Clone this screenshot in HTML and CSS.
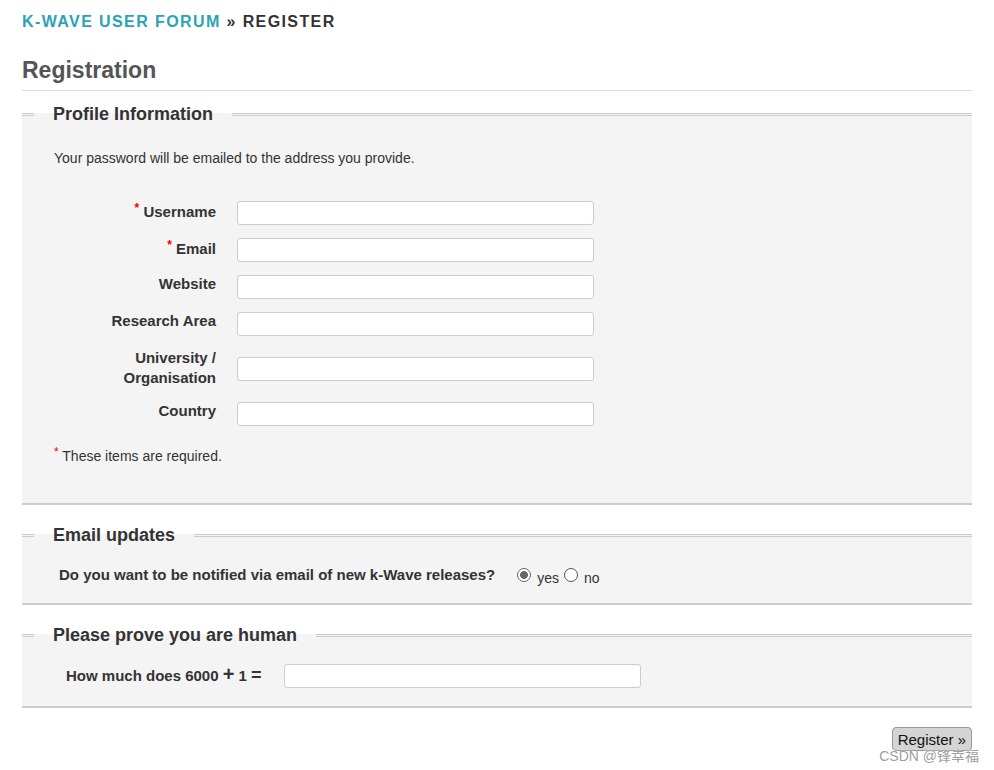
FILE: index.html
```html
<!DOCTYPE html>
<html>
    <head>
        <meta charset="UTF-8" />
        <title>k-Wave User Forum - Register</title>
        <link rel="stylesheet" href="styles.css">
    </head>
    <body>
        <div class="page">
            <div class="crumbs">
                <a href="#" class="crumb-home">K-Wave User Forum</a>
                <span class="crumb-sep">&raquo;</span>
                <span class="crumb-current">Register</span>
            </div>

            <h1 class="title">Registration</h1>

            <form id="register-form">
                <!-- Profile -->
                <fieldset class="box">
                    <legend>Profile Information</legend>
                    <div class="box-body box-profile">
                        <p class="note">Your password will be emailed to the address you provide.</p>

                        <div class="row">
                            <label for="username" class="required"><span class="req">*</span> Username</label>
                            <input type="text" id="username" name="username" />
                        </div>
                        <div class="row">
                            <label for="email" class="required"><span class="req">*</span> Email</label>
                            <input type="text" id="email" name="email" />
                        </div>
                        <div class="row">
                            <label for="website">Website</label>
                            <input type="text" id="website" name="website" />
                        </div>
                        <div class="row">
                            <label for="research">Research Area</label>
                            <input type="text" id="research" name="research" />
                        </div>
                        <div class="row row-tall">
                            <label for="university">University / Organisation</label>
                            <input type="text" id="university" name="university" />
                        </div>
                        <div class="row">
                            <label for="country">Country</label>
                            <input type="text" id="country" name="country" />
                        </div>

                        <p class="note note-req"><span class="req">*</span> These items are required.</p>
                    </div>
                </fieldset>

                <!-- Email updates -->
                <fieldset class="box">
                    <legend>Email updates</legend>
                    <div class="box-body box-updates">
                        <span class="question">Do you want to be notified via email of new k-Wave releases?</span>
                        <span class="choices">
                            <input type="radio" id="notify-yes" name="notify" value="yes" checked />
                            <label for="notify-yes">yes</label>
                            <input type="radio" id="notify-no" name="notify" value="no" />
                            <label for="notify-no">no</label>
                        </span>
                    </div>
                </fieldset>

                <!-- Captcha -->
                <fieldset class="box">
                    <legend>Please prove you are human</legend>
                    <div class="box-body box-human">
                        <label for="captcha" class="question">How much does 6000 <span class="op">+</span> 1 <span class="op op-eq">=</span></label>
                        <input type="text" id="captcha" name="captcha" />
                    </div>
                </fieldset>

                <div class="actions">
                    <button type="submit" class="btn">Register &raquo;</button>
                </div>
            </form>

            <span class="watermark">CSDN @锋幸福</span>
        </div>
    </body>
</html>
```

FILE: styles.css
```css
html,
body {
    margin: 0;
    padding: 0;
}

body {
    font-family: "Liberation Sans", Arial, "Noto Sans CJK SC", sans-serif;
    font-size: 14px;
    color: #333;
    background-color: #fff;
}

.page {
    position: relative;
    margin: 0 22px;
    padding-top: 12px;
    height: 758px;
}

/* breadcrumb */
.crumbs {
    font-size: 16px;
    line-height: 20px;
    font-weight: bold;
    text-transform: uppercase;
    letter-spacing: 1.4px;
}

.crumb-home {
    color: #2aa3b4;
    text-decoration: none;
}

.crumb-sep,
.crumb-current {
    color: #333;
}

.title {
    margin: 24px 0 0 0;
    padding-bottom: 6px;
    font-size: 23px;
    line-height: 28px;
    color: #555;
    border-bottom: 1px solid #ddd;
}

/* fieldsets */
.box {
    margin: 12px 0 0 0;
    padding: 0;
    min-width: 0;
    background-color: #f4f4f4;
    border: none;
    border-top: 3px double #ccc;
    border-bottom: 2px solid #ccc;
}

.box + .box {
    margin-top: 19px;
}

.box legend {
    margin-left: 12px;
    padding: 0 19px;
    font-size: 18px;
    line-height: 22px;
    font-weight: bold;
    color: #333;
}

.note {
    margin: 0;
    font-size: 14px;
    line-height: 18px;
}

.box-profile {
    padding: 24px 0 38px 32px;
}

.box-profile .note:first-child {
    margin-bottom: 34px;
}

.row {
    display: flex;
    align-items: center;
    margin-bottom: 13px;
}

.row label {
    position: relative;
    top: -3px;
    width: 162px;
    margin-right: 21px;
    text-align: right;
    font-size: 15px;
    line-height: 20px;
    font-weight: bold;
}

.row label.required {
    top: -1px;
}

.row-tall label {
    top: -1px;
}

input[type="text"] {
    width: 357px;
    height: 24px;
    padding: 2px 6px;
    border: 1px solid #ccc;
    border-radius: 3px;
    box-sizing: border-box;
    background-color: #fff;
    font-family: inherit;
    font-size: 14px;
}

.note-req {
    margin-top: 21px;
}

.req {
    position: relative;
    top: -5px;
    color: #e00;
    font-size: 12px;
    line-height: 10px;
}

.box-updates {
    display: flex;
    align-items: center;
    padding: 20px 0 19px 37px;
    line-height: 18px;
}

.question {
    font-size: 15px;
    font-weight: bold;
}

.choices {
    display: flex;
    align-items: center;
    margin-left: 22px;
}

.choices label {
    position: relative;
    top: 3px;
    margin-left: 6px;
    font-size: 14px;
}

input[type="radio"] {
    appearance: none;
    -webkit-appearance: none;
    width: 14px;
    height: 14px;
    margin: 0;
    border: 1px solid #555;
    border-radius: 50%;
    background-color: #fff;
    box-sizing: border-box;
}

input[type="radio"]:checked {
    background: radial-gradient(circle, #666 0, #666 3.6px, #fff 4.2px);
    border-color: #666;
}

#notify-no {
    margin-left: 5px;
}

.box-human {
    display: flex;
    align-items: center;
    padding: 18px 0 18px 44px;
}

.box-human .question {
    margin-right: 22px;
    line-height: 20px;
}

.op {
    font-size: 20px;
    line-height: 10px;
}

.op-eq {
    font-size: 18px;
}

/* button */
.actions {
    margin-top: 19px;
    text-align: right;
}

.btn {
    height: 24px;
    padding: 0 5px;
    font-family: inherit;
    font-size: 15px;
    color: #111;
    background-color: #d4d4d4;
    border: 1px solid #999;
    border-radius: 4px;
    cursor: pointer;
}

.btn:hover {
    background-color: #c8c8c8;
}

.watermark {
    position: absolute;
    right: -7px;
    top: 745px;
    font-size: 14px;
    color: #a0a0a0;
    text-shadow: 0 0 2px #fff;
    pointer-events: none;
}
```
